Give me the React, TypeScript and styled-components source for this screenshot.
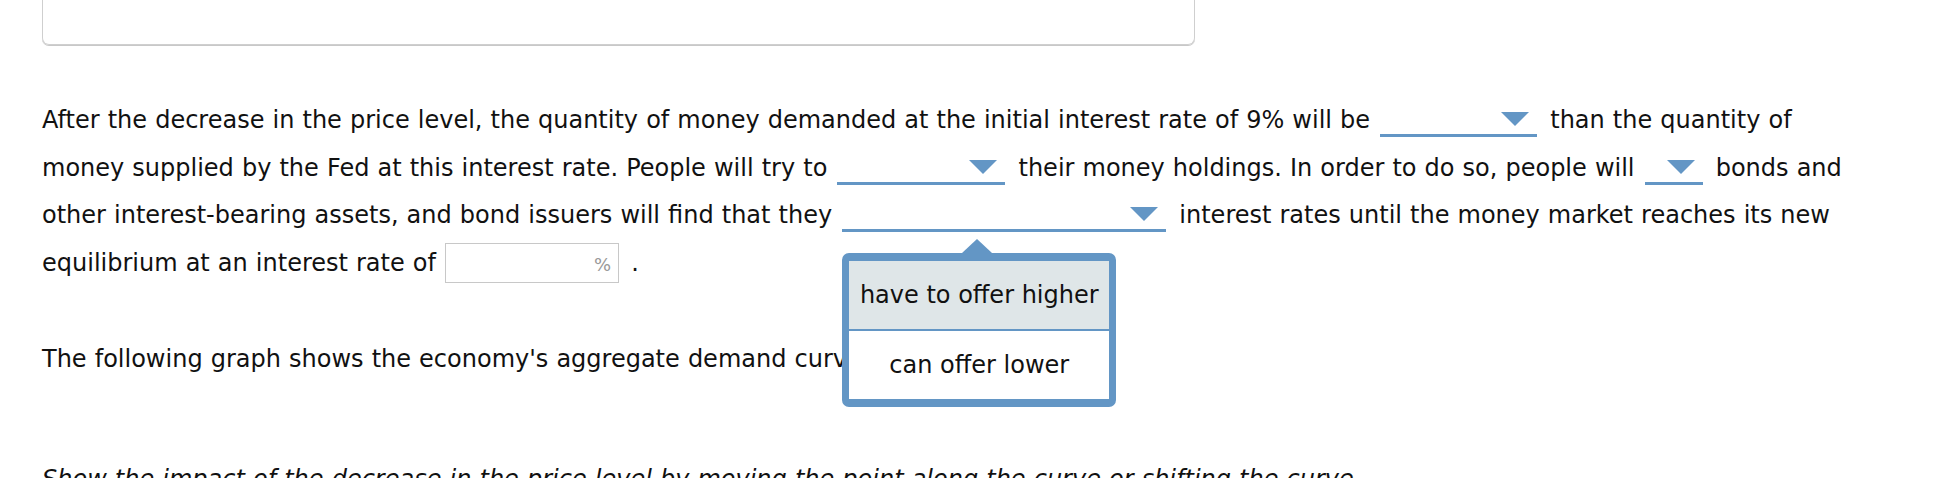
import React from "react";
import styled, { createGlobalStyle } from "styled-components";

const BLUE = "#6396c5";

const GlobalStyle = createGlobalStyle`
  html, body {
    margin: 0;
    padding: 0;
    background: #fff;
  }
  body {
    font-family: "DejaVu Sans", Verdana, sans-serif;
    color: #111;
    overflow: hidden;
  }
`;

const Page = styled.div`
  width: 1816px;
  padding-left: 42px;
`;

const AnswerPanel = styled.div`
  width: 1151px;
  height: 44px;
  border: 1px solid #cfcfcf;
  border-top: none;
  border-radius: 0 0 7px 7px;
  box-shadow: 0 1px 0 #c8c8c8;
`;

const Passage = styled.p<{ $gap: number }>`
  margin: ${(p) => p.$gap}px 0 0;
  font-size: 24px;
  line-height: 47.5px;
  word-spacing: 0.45px;
  position: relative;
`;

const Instruction = styled(Passage)`
  font-style: italic;
`;

/* blank select: underline with a caret at its right end */
const Select = styled.span<{ $width: number }>`
  position: relative;
  display: inline-block;
  box-sizing: border-box;
  width: ${(p) => p.$width}px;
  height: 25px;
  margin: 0 5px 0 2px;
  padding-right: 8px;
  border-bottom: 3px solid ${BLUE};
  vertical-align: -9px;
`;

const Caret = styled.span`
  float: right;
  width: 0;
  height: 0;
  border-left: 14px solid transparent;
  border-right: 14px solid transparent;
  border-top: 14px solid ${BLUE};
`;

const Menu = styled.div`
  position: absolute;
  left: 0;
  top: calc(100% + 24px);
  z-index: 5;
  width: 274px;
  box-sizing: border-box;
  border: 7px solid ${BLUE};
  border-width: 8px 7px;
  border-radius: 7px;
  background: #fff;
  display: flex;
  flex-direction: column;
  line-height: normal;
  word-spacing: normal;

  &::before {
    content: "";
    position: absolute;
    top: -22px;
    left: calc(50% - 17px);
    border-left: 15px solid transparent;
    border-right: 15px solid transparent;
    border-bottom: 14px solid ${BLUE};
  }
`;

const MenuOption = styled.div<{ $active?: boolean }>`
  height: 68px;
  display: flex;
  align-items: center;
  justify-content: center;
  font-size: 24px;
  color: #111;
  background: ${(p) => (p.$active ? "#dfe6e8" : "#fff")};
  & + & {
    border-top: 2px solid ${BLUE};
  }
`;

const PercentField = styled.span`
  display: inline-flex;
  justify-content: flex-end;
  align-items: flex-end;
  box-sizing: border-box;
  width: 174px;
  height: 40px;
  margin: 0 4px 0 1px;
  padding: 0 7px 8px 0;
  border: 1px solid #c8c8c8;
  font-size: 18px;
  line-height: 18px;
  color: #999;
`;

type SelectProps = { width: number; options?: string[] };

function Dropdown({ width, options }: SelectProps) {
  return (
    <Select $width={width}>
      <Caret />
      {options && (
        <Menu>
          {options.map((o, i) => (
            <MenuOption key={o} $active={i === 0}>
              {o}
            </MenuOption>
          ))}
        </Menu>
      )}
    </Select>
  );
}

export default function App() {
  return (
    <>
      <GlobalStyle />
      <Page>
        <AnswerPanel />
        <Passage $gap={52}>
          After the decrease in the price level, the quantity of money demanded at the initial
          interest rate of 9% will be <Dropdown width={157} /> than the quantity of money supplied
          by the Fed at this interest rate. People will try to <Dropdown width={168} /> their money
          holdings. In order to do so, people will <Dropdown width={58} /> bonds and other
          interest-bearing assets, and bond issuers will find that they{" "}
          <Dropdown width={324} options={["have to offer higher", "can offer lower"]} /> interest
          rates until the money market reaches its new equilibrium at an interest rate of{" "}
          <PercentField>%</PercentField> .
        </Passage>
        <Passage $gap={49}>
          The following graph shows the economy's aggregate demand curve.
        </Passage>
        <Instruction $gap={72}>
          Show the impact of the decrease in the price level by moving the point along the curve
          or shifting the curve.
        </Instruction>
      </Page>
    </>
  );
}
